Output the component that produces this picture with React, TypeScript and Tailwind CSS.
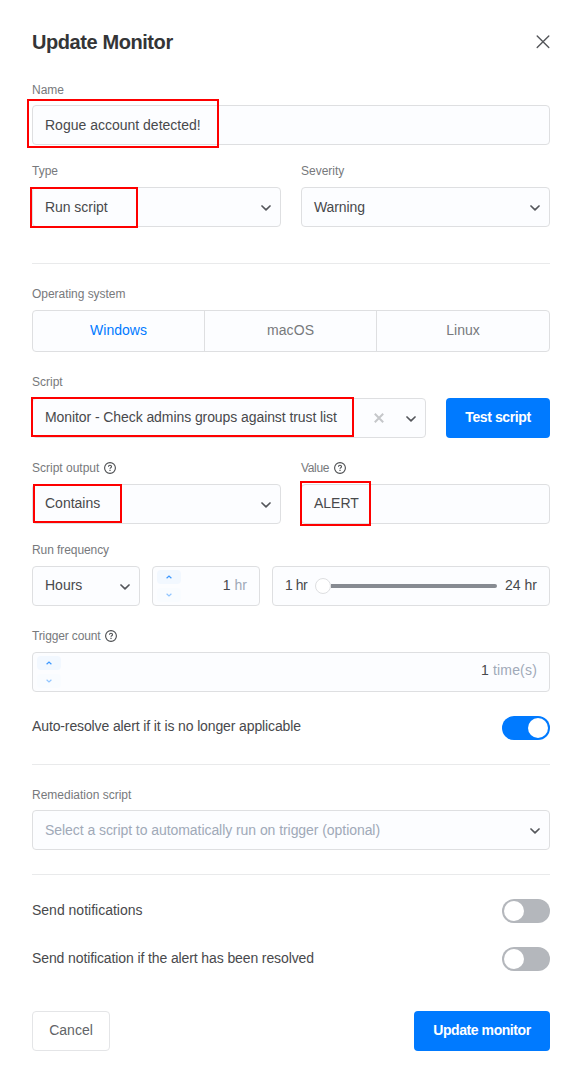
import { useState, type ReactNode } from "react";
import clsx from "clsx";

function Chevron({ className }: { className?: string }) {
  return (
    <svg viewBox="0 0 10 6" fill="none" className={clsx("mt-0.5 h-[6px] w-[10px] shrink-0", className)}>
      <path d="M1 1L5 4.8L9 1" stroke="#54565b" strokeWidth="1.7" strokeLinecap="round" strokeLinejoin="round" />
    </svg>
  );
}

function HelpIcon() {
  return (
    <svg viewBox="0 0 12 12" fill="none" stroke="#4b4d50" className="ml-[5px] size-3 shrink-0">
      <circle cx="6" cy="6" r="5.4" strokeWidth="1.1" />
      <path d="M4.5 4.8C4.5 3.9 5.1 3.3 6 3.3S7.5 3.9 7.5 4.7C7.5 5.7 6 5.7 6 6.8" strokeWidth="1.1" />
      <path d="M6 7.8V9" strokeWidth="1.2" />
    </svg>
  );
}

function Label({ children, help, className }: { children: ReactNode; help?: boolean; className?: string }) {
  return (
    <div className="flex h-4 items-center text-xs leading-4 text-[#77797c]">
      <span className={clsx("whitespace-nowrap", className)}>{children}</span>
      {help && <HelpIcon />}
    </div>
  );
}

function Box({ children, className }: { children?: ReactNode; className?: string }) {
  return (
    <div
      className={clsx(
        "relative flex h-10 items-center rounded border border-[#dedfe1] bg-[#fcfdff] pl-3 pb-px",
        className,
      )}
    >
      {children}
    </div>
  );
}

function Highlight({ className }: { className: string }) {
  return <span className={clsx("pointer-events-none absolute border-2 border-[#fe0000]", className)} />;
}

function Stepper() {
  return (
    <div className="-ml-2 flex shrink-0 flex-col gap-1 pt-px">
      <button className="flex h-[14px] w-6 items-center justify-center rounded bg-[#f2f8ff]">
        <svg viewBox="0 0 6 4" fill="none" className="h-1 w-1.5">
          <path d="M0.6 3.2L3 1L5.4 3.2" stroke="#3d98ff" strokeWidth="1.2" />
        </svg>
      </button>
      <button className="flex h-[14px] w-6 items-center justify-center rounded bg-[#f9fcff]">
        <svg viewBox="0 0 6 4" fill="none" className="h-1 w-1.5">
          <path d="M0.6 0.8L3 3L5.4 0.8" stroke="#91c5ff" strokeWidth="1.2" />
        </svg>
      </button>
    </div>
  );
}

function Toggle({ defaultOn = false }: { defaultOn?: boolean }) {
  const [on, setOn] = useState(defaultOn);

  return (
    <button
      role="switch"
      aria-checked={on}
      onClick={() => setOn(!on)}
      className={clsx(
        "flex h-6 w-12 shrink-0 items-center rounded-full px-0.5",
        on ? "justify-end bg-[#007aff]" : "justify-start bg-[#b4b7bc]",
      )}
    >
      <span className="size-5 rounded-full bg-white" />
    </button>
  );
}

const systems = [
  { name: "Windows", className: "w-[171px]" },
  { name: "macOS", className: "w-[172px] border-l border-[#dedfe1] tracking-[0.1px]" },
  { name: "Linux", className: "flex-1 border-l border-[#dedfe1]" },
];

export default function App() {
  const [system, setSystem] = useState("Windows");

  return (
    <div className="h-[1071px] w-[577px] bg-white pt-7 pr-[27px] pl-8 font-['Liberation_Sans',Arial,sans-serif] text-sm text-[#48494c]">
      <header className="flex h-7 items-center justify-between">
        <h1 className="text-xl leading-7 font-semibold tracking-[-0.42px] text-[#343537]">Update Monitor</h1>
        <button aria-label="Close">
          <svg viewBox="0 0 14 14" className="size-[14px]" stroke="#54565a" strokeWidth="1.4" strokeLinecap="round">
            <path d="M1.2 1L12.8 12.6M12.8 1L1.2 12.6" />
          </svg>
        </button>
      </header>

      <section className="mt-[26px] flex flex-col gap-[7px]">
        <Label>Name</Label>
        <Box>
          <span>Rogue account detected!</span>
          <Highlight className="-top-[7px] -left-[6px] h-[49px] w-[192px]" />
        </Box>
      </section>

      <section className="mt-[18px] grid grid-cols-2 gap-5">
        <div className="flex flex-col gap-2">
          <Label>Type</Label>
          <Box>
            <span className="tracking-[-0.05px]">Run script</span>
            <Chevron className="mr-[9px] ml-auto" />
            <Highlight className="-top-px -left-[3px] h-[41px] w-[108px]" />
          </Box>
        </div>
        <div className="flex flex-col gap-2">
          <Label>Severity</Label>
          <Box>
            <span className="tracking-[-0.1px]">Warning</span>
            <Chevron className="mr-[9px] ml-auto" />
          </Box>
        </div>
      </section>

      <hr className="mt-9 border-[#e9eaeb]" />

      <section className="mt-[22px] flex flex-col gap-2">
        <Label className="tracking-[-0.04px]">Operating system</Label>
        <div className="flex h-[42px] overflow-hidden rounded border border-[#dedfe1] bg-[#fcfdff]">
          {systems.map((item) => (
            <button
              key={item.name}
              onClick={() => setSystem(item.name)}
              className={clsx(
                "pb-[3px] text-center",
                item.className,
                system === item.name ? "text-[#007aff]" : "text-[#77797c]",
              )}
            >
              {item.name}
            </button>
          ))}
        </div>
      </section>

      <section className="mt-[22px] flex flex-col gap-2">
        <Label>Script</Label>
        <div className="flex gap-5">
          <Box className="w-[394px]">
            <span className="mb-0.5 tracking-[-0.08px] whitespace-nowrap">
              Monitor - Check admins groups against trust list
            </span>
            <svg viewBox="0 0 10 10" className="mt-px ml-auto size-[10px]" stroke="#c5c7ca" strokeWidth="2">
              <path d="M0.8 0.8L9.2 9.2M9.2 0.8L0.8 9.2" />
            </svg>
            <Chevron className="mr-[9px] ml-[22px]" />
            <Highlight className="-top-[2px] -left-[2px] h-[40px] w-[323px]" />
          </Box>
          <button className="h-10 w-[104px] rounded bg-[#007aff] pb-[3px] font-bold tracking-[-0.4px] text-white">
            Test script
          </button>
        </div>
      </section>

      <section className="mt-[22px] grid grid-cols-2 gap-5">
        <div className="flex flex-col gap-2">
          <Label help>Script output</Label>
          <Box>
            <span className="mb-0.5">Contains</span>
            <Chevron className="mr-[9px] ml-auto" />
            <Highlight className="-top-px left-0 h-[39px] w-[89px]" />
          </Box>
        </div>
        <div className="flex flex-col gap-2">
          <Label help className="tracking-[-0.35px]">
            Value
          </Label>
          <Box>
            <span className="mb-0.5">ALERT</span>
            <Highlight className="-top-1 -left-[2px] h-[45px] w-[71px]" />
          </Box>
        </div>
      </section>

      <section className="mt-[18px] flex flex-col gap-2">
        <Label className="tracking-[-0.08px]">Run frequency</Label>
        <div className="flex gap-3">
          <Box className="w-[108px]">
            <span className="mb-0.5">Hours</span>
            <Chevron className="mr-[9px] ml-auto" />
          </Box>
          <Box className="w-[108px]">
            <Stepper />
            <span className="mb-0.5 ml-auto pr-3">
              1 <span className="text-[#a0a9b8]">hr</span>
            </span>
          </Box>
          <Box className="flex-1 pr-3">
            <span className="mb-0.5 tracking-[-0.45px]">1 hr</span>
            <div className="ml-2 flex flex-1 items-center pt-px">
              <span className="size-4 shrink-0 rounded-full border border-[#dedfe1] bg-white" />
              <span className="h-1 flex-1 rounded-r-full bg-[#878b92]" />
            </div>
            <span className="mb-0.5 ml-2">24 hr</span>
          </Box>
        </div>
      </section>

      <section className="mt-[22px] flex flex-col gap-2">
        <Label help className="tracking-[-0.14px]">
          Trigger count
        </Label>
        <Box>
          <Stepper />
          <span className="mb-[3px] ml-auto pr-3 tracking-[0.18px]">
            1 <span className="text-[#a0a9b8]">time(s)</span>
          </span>
        </Box>
      </section>

      <div className="mt-6 flex h-6 justify-between">
        <span className="leading-5 tracking-[-0.12px]">Auto-resolve alert if it is no longer applicable</span>
        <Toggle defaultOn />
      </div>

      <hr className="mt-6 border-[#e9eaeb]" />

      <section className="mt-[22px] flex flex-col gap-[7px]">
        <Label>Remediation script</Label>
        <Box>
          <span className="tracking-[-0.06px] text-[#a0a9b8]">
            Select a script to automatically run on trigger (optional)
          </span>
          <Chevron className="mr-[9px] ml-auto" />
        </Box>
      </section>

      <hr className="mt-6 border-[#e9eaeb]" />

      <section className="mt-6 flex flex-col gap-6">
        <div className="flex h-6 justify-between">
          <span className="leading-[22px]">Send notifications</span>
          <Toggle />
        </div>
        <div className="flex h-6 justify-between">
          <span className="leading-[22px] tracking-[-0.11px]">Send notification if the alert has been resolved</span>
          <Toggle />
        </div>
      </section>

      <footer className="mt-10 flex justify-between">
        <button className="h-10 w-[78px] rounded border border-[#e4e5e7] pb-[3px] text-[#626467]">Cancel</button>
        <button className="h-10 w-[136px] rounded bg-[#007aff] pb-[3px] font-bold tracking-[-0.43px] text-white">
          Update monitor
        </button>
      </footer>
    </div>
  );
}
